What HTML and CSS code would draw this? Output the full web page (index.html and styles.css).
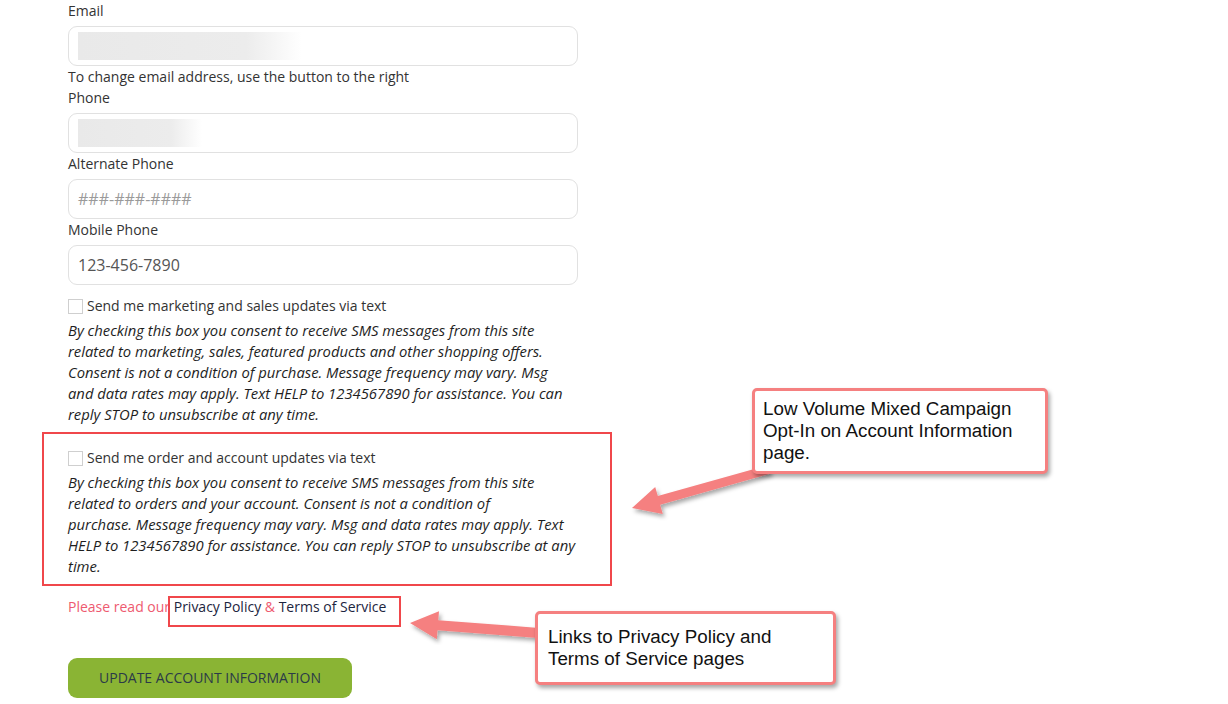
FILE: index.html
```html
<!DOCTYPE html>
<html>
<head>
<meta charset="utf-8">
<link rel="stylesheet" href="styles.css">
</head>
<body>
<div class="page">
  <form class="form">
    <div class="label">Email</div>
    <div class="field"><span class="blur blur-email"></span></div>
    <div class="help">To change email address, use the button to the right</div>
    <div class="label">Phone</div>
    <div class="field"><span class="blur blur-phone"></span></div>
    <div class="label">Alternate Phone</div>
    <div class="field"><span class="placeholder">###-###-####</span></div>
    <div class="label">Mobile Phone</div>
    <div class="field"><span class="value">123-456-7890</span></div>

    <div class="consent">
      <label class="check"><span class="box"></span>Send me marketing and sales updates via text</label>
      <p class="legal">By checking this box you consent to receive SMS messages from this site<br>related to marketing, sales, featured products and other shopping offers.<br>Consent is not a condition of purchase. Message frequency may vary. Msg<br>and data rates may apply. Text HELP to 1234567890 for assistance. You can<br>reply STOP to unsubscribe at any time.</p>
    </div>

    <div class="consent highlight">
      <label class="check"><span class="box"></span>Send me order and account updates via text</label>
      <p class="legal">By checking this box you consent to receive SMS messages from this site<br>related to orders and your account. Consent is not a condition of<br>purchase. Message frequency may vary. Msg and data rates may apply. Text<br>HELP to 1234567890 for assistance. You can reply STOP to unsubscribe at any<br>time.</p>
    </div>

    <div class="policy">Please read our <span class="links"><a class="link">Privacy Policy</a> &amp; <a class="link">Terms of Service</a></span></div>

    <button type="button" class="submit">UPDATE ACCOUNT INFORMATION</button>
  </form>

  <svg class="arrows" width="1228" height="704" viewBox="0 0 1228 704">
    <defs>
      <filter id="sh" x="-20%" y="-20%" width="140%" height="140%">
        <feDropShadow dx="2" dy="3" stdDeviation="2" flood-color="#000" flood-opacity="0.35"/>
      </filter>
    </defs>
    <polygon filter="url(#sh)" fill="#f58080" points="632,508 655.2,486.9 657.8,496.1 768.5,464.9 770.9,473.5 660.2,504.7 662.8,513.9"/>
    <polygon filter="url(#sh)" fill="#f58080" points="410,623 439,611.2 438.3,620.2 545,628.4 544.2,638.4 437.5,630.2 436.8,639.2"/>
  </svg>

  <div class="callout callout-1">Low Volume Mixed Campaign<br>Opt-In on Account Information<br>page.</div>
  <div class="callout callout-2">Links to Privacy Policy and<br>Terms of Service pages</div>
</div>
</body>
</html>
```

FILE: styles.css
```css
html, body {
  margin: 0;
  padding: 0;
  background: #ffffff;
}

.page {
  position: relative;
  width: 1228px;
  height: 704px;
  overflow: hidden;
  font-family: "Open Sans", "Liberation Sans", sans-serif;
  color: #333333;
}

.form {
  display: flex;
  flex-direction: column;
  width: 510px;
  padding: 1px 0 0 68px;
  font-size: 14px;
  line-height: 20px;
}

.label {
  height: 20px;
}

.help {
  height: 21px;
}

.field {
  box-sizing: border-box;
  height: 40px;
  margin: 5px 0 1px;
  border: 1px solid #e1e1e1;
  border-radius: 9px;
  display: flex;
  align-items: center;
  padding: 0 9px;
  font-size: 16px;
}

.blur {
  display: block;
  height: 28px;
  background: linear-gradient(to right, #e9e9e9 0%, #ececec 75%, #ffffff 100%);
}

.blur-email { width: 224px; }
.blur-phone { width: 124px; }

.placeholder { color: #9a9a9a; }
.value { color: #555555; }

.consent {
  display: flex;
  flex-direction: column;
  margin-top: 10px;
}

.check {
  display: flex;
  align-items: center;
  height: 20px;
}

.box {
  box-sizing: border-box;
  width: 15px;
  height: 15px;
  border: 1px solid #cfcfcf;
  margin-right: 4px;
  background: #fff;
}

.legal {
  margin: 4px 0 0;
  font-style: italic;
  font-size: 14.8px;
  line-height: 21px;
  color: #1e1e1e;
  white-space: nowrap;
}

.highlight {
  margin: 7px -34px 0 -26px;
  padding: 14px 32px 7px 24px;
  border: 2px solid #f0474b;
}

.policy {
  margin-top: 11px;
  height: 20px;
  color: #ee5a70;
}

.links {
  position: relative;
}

.links::after {
  content: "";
  position: absolute;
  left: -6px;
  right: -15px;
  top: -1px;
  height: 31px;
  border: 2px solid #f0474b;
  box-sizing: border-box;
}

.link {
  color: #1c2540;
  text-decoration: none;
}

.submit {
  align-self: flex-start;
  margin-top: 41px;
  width: 284px;
  height: 40px;
  border: none;
  border-radius: 9px;
  background: #8ab434;
  color: #2b3a48;
  font-family: "Open Sans", "Liberation Sans", sans-serif;
  font-size: 14px;
  line-height: 38px;
  padding: 0;
}

.arrows {
  position: absolute;
  left: 0;
  top: 0;
}

.callout {
  position: absolute;
  box-sizing: border-box;
  background: #ffffff;
  border: 3px solid #f58080;
  border-radius: 5px;
  box-shadow: 2px 3px 4px rgba(0, 0, 0, 0.35);
  font-family: "Liberation Sans", Arial, sans-serif;
  font-size: 18.8px;
  line-height: 22px;
  color: #111111;
}

.callout-1 {
  left: 752px;
  top: 388px;
  width: 296px;
  height: 86px;
  padding: 7px 0 0 8px;
}

.callout-2 {
  left: 535px;
  top: 611px;
  width: 301px;
  height: 74px;
  padding: 12px 0 0 10px;
}
```
